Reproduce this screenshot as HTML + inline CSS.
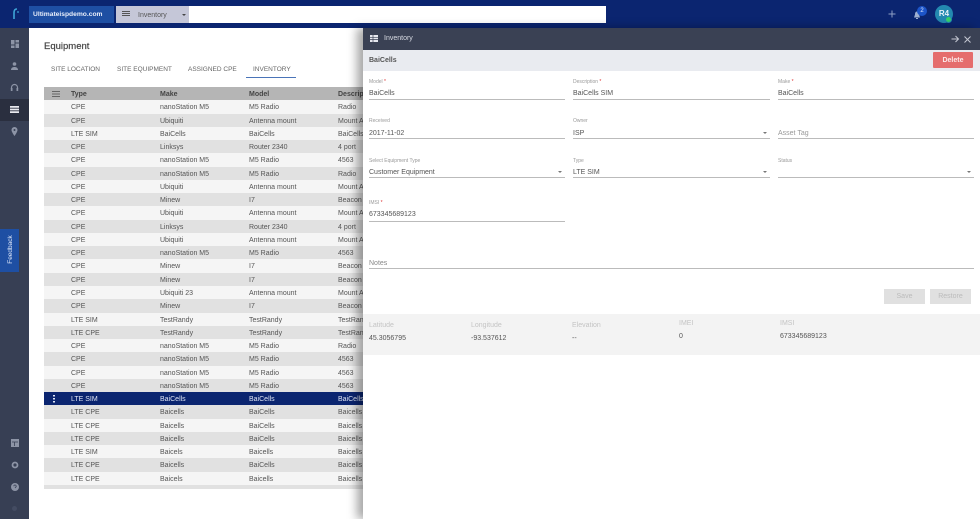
<!DOCTYPE html>
<html><head><meta charset="utf-8"><style>
html,body{margin:0;padding:0;width:980px;height:519px;overflow:hidden;background:#fff;font-family:"Liberation Sans",sans-serif;color:#444}
*{box-sizing:border-box}
.a{position:absolute;white-space:nowrap}
#top{position:absolute;left:0;top:0;width:980px;height:28px;background:#0b2570}
#side{position:absolute;left:0;top:28px;width:29px;height:491px;background:#373f54}
#grid{position:absolute;left:44px;top:87px;width:330px}
.r{position:relative;height:13.27px;font-size:7px;line-height:13.27px;color:#555}
.r span{position:absolute;white-space:nowrap;top:1px}
.r span:nth-child(1){left:27px}.r span:nth-child(2){left:116px}.r span:nth-child(3){left:205px}.r span:nth-child(4){left:294px}
.r:nth-child(even){background:#f5f5f5}.r:nth-child(odd){background:#e1e1e1}
.r.h{background:#b5b5b5;font-weight:bold;color:#444}
.r.s{background:#0b2570;color:#dfe5f5}
#panel{position:absolute;left:363px;top:28px;width:617px;height:491px;background:#fff;box-shadow:-6px 0 9px rgba(0,0,0,.35)}
.lb{position:absolute;font-size:5px;color:#999;white-space:nowrap;margin-top:1px}
.lb b{color:#d33;font-weight:normal}
.v{position:absolute;font-size:7px;color:#555;white-space:nowrap;margin-top:2px}
.u{position:absolute;height:1px;background:#bbb}
.ar{position:absolute;width:0;height:0;border-left:2px solid transparent;border-right:2px solid transparent;border-top:2px solid #777}
.t{position:absolute;top:66px;font-size:6.5px;line-height:8px;color:#666;white-space:nowrap}
</style></head><body>
<div id="top">
<svg class="a" style="left:11px;top:7px" width="9" height="13" viewBox="0 0 9 13"><path d="M3 12V6C3 3 4 2 6 2" fill="none" stroke="#3fa6d8" stroke-width="1.6"/><circle cx="7" cy="5" r=".9" fill="#3fa6d8"/></svg>
<div class="a" style="left:29px;top:6px;width:85px;height:17px;background:#1e4fa3;color:#e8eefa;font-size:6.7px;font-weight:bold;line-height:18px;padding-left:4px">Ultimateispdemo.com</div>
<div class="a" style="left:116px;top:6px;width:490px;height:17px;background:#fff"></div>
<div class="a" style="left:116px;top:6px;width:73px;height:17px;background:#c5c7d8;color:#555;font-size:7px;line-height:19px;padding-left:22px">Inventory</div>
<svg class="a" style="left:122px;top:11px" width="8" height="6"><path d="M0 .5h8M0 2.500h8M0 4.500h8" stroke="#555" stroke-width="1.100"/></svg>
<div class="ar" style="left:182px;top:14px;border-top-color:#444"></div>
<svg class="a" style="left:888px;top:10px" width="8" height="8"><path d="M4 .5v7M.5 4h7" stroke="#8fa0c4" stroke-width="1"/></svg>
<svg class="a" style="left:913px;top:11px" width="8" height="8"><path d="M4 .5C2.500.5 2 2 2 3.500L1 6.500h6L6 3.500C6 2 5.500.5 4 .5zM3 7h2v1H3z" fill="#9fb0d0"/></svg>
<div class="a" style="left:917px;top:6px;width:10px;height:10px;border-radius:50%;background:#1c54c8;color:#dfe8ff;font-size:6px;line-height:10px;text-align:center">2</div>
<div class="a" style="left:935px;top:5px;width:18px;height:18px;border-radius:50%;background:#2389b0;color:#e6f2f8;font-size:8px;font-weight:bold;line-height:17px;text-align:center">R4</div>
<div class="a" style="left:945px;top:16px;width:7px;height:7px;border-radius:50%;background:#35d06a;border:1px solid #2389b0"></div>
</div>
<div id="side">
<div class="a" style="left:0;top:71px;width:29px;height:22px;background:#2a2f3f"></div>
<svg class="a" style="left:11px;top:12px" width="8" height="8"><path d="M0 0h3.500v4.500H0zM4.500 0H8v2.500H4.500zM4.500 3.500H8V8H4.500zM0 5.500h3.500V8H0z" fill="#8d94a6"/></svg>
<svg class="a" style="left:10px;top:34px" width="9" height="8"><circle cx="4.500" cy="2" r="1.800" fill="#8d94a6"/><path d="M1 8c0-2 1.500-3 3.500-3S8 6 8 8z" fill="#8d94a6"/></svg>
<svg class="a" style="left:10px;top:55px" width="9" height="9"><path d="M1.500 6V4.500a3 3 0 0 1 6 0V6" fill="none" stroke="#8d94a6" stroke-width="1.200"/><path d="M.8 5h1.700v3H.8zM6.500 5h1.700v3H6.500z" fill="#8d94a6"/></svg>
<svg class="a" style="left:10px;top:78px" width="9" height="7"><path d="M0 0h9v1.800H0zM0 2.600h9v1.800H0zM0 5.200h9V7H0z" fill="#e8e9ee"/></svg>
<svg class="a" style="left:11px;top:99px" width="7" height="9"><path d="M3.500 0A3 3 0 0 0 .5 3c0 2 3 6 3 6s3-4 3-6a3 3 0 0 0-3-3z" fill="#8d94a6"/><circle cx="3.500" cy="3" r="1" fill="#373f54"/></svg>
<svg class="a" style="left:11px;top:411px" width="8" height="8"><path d="M0 0h8v8H0z" fill="#8d94a6"/><path d="M1 3h6M3.500 3v4" stroke="#373f54" stroke-width=".8"/></svg>
<svg class="a" style="left:11px;top:433px" width="8" height="8"><circle cx="4" cy="4" r="2.500" fill="none" stroke="#8d94a6" stroke-width="1.800"/></svg>
<svg class="a" style="left:11px;top:455px" width="8" height="8"><circle cx="4" cy="4" r="4" fill="#8d94a6"/><path d="M2.800 3.200a1.200 1.200 0 1 1 1.700 1.100L4 5" fill="none" stroke="#373f54" stroke-width=".8"/></svg>
<div class="a" style="left:12px;top:478px;width:5px;height:5px;border-radius:50%;background:#444c62"></div>
</div>
<div class="a" style="left:0;top:229px;width:19px;height:43px;background:#1e4fa3"></div>
<div class="a" style="left:-10px;top:246px;width:41px;text-align:center;font-size:6.5px;color:#dfe8fa;transform:rotate(-90deg)">Feedback</div>
<div class="a" style="left:44px;top:41px;font-size:9.500px;line-height:12px;-webkit-text-stroke:.2px #444;color:#444">Equipment</div>
<div class="t" style="left:51px">SITE LOCATION</div>
<div class="t" style="left:117px">SITE EQUIPMENT</div>
<div class="t" style="left:188px">ASSIGNED CPE</div>
<div class="t" style="left:253px">INVENTORY</div>
<div class="a" style="left:246px;top:77px;width:50px;height:1px;background:#4a74b8"></div>
<div id="grid">
<div class="r h"><span>Type</span><span>Make</span><span>Model</span><span>Description</span></div>
<div class="r"><span>CPE</span><span>nanoStation M5</span><span>M5 Radio</span><span>Radio</span></div>
<div class="r"><span>CPE</span><span>Ubiquiti</span><span>Antenna mount</span><span>Mount Adapter</span></div>
<div class="r"><span>LTE SIM</span><span>BaiCells</span><span>BaiCells</span><span>BaiCells SIM</span></div>
<div class="r"><span>CPE</span><span>Linksys</span><span>Router 2340</span><span>4 port</span></div>
<div class="r"><span>CPE</span><span>nanoStation M5</span><span>M5 Radio</span><span>4563</span></div>
<div class="r"><span>CPE</span><span>nanoStation M5</span><span>M5 Radio</span><span>Radio</span></div>
<div class="r"><span>CPE</span><span>Ubiquiti</span><span>Antenna mount</span><span>Mount Adapter</span></div>
<div class="r"><span>CPE</span><span>Minew</span><span>I7</span><span>Beacon</span></div>
<div class="r"><span>CPE</span><span>Ubiquiti</span><span>Antenna mount</span><span>Mount Adapter</span></div>
<div class="r"><span>CPE</span><span>Linksys</span><span>Router 2340</span><span>4 port</span></div>
<div class="r"><span>CPE</span><span>Ubiquiti</span><span>Antenna mount</span><span>Mount Adapter</span></div>
<div class="r"><span>CPE</span><span>nanoStation M5</span><span>M5 Radio</span><span>4563</span></div>
<div class="r"><span>CPE</span><span>Minew</span><span>I7</span><span>Beacon</span></div>
<div class="r"><span>CPE</span><span>Minew</span><span>I7</span><span>Beacon</span></div>
<div class="r"><span>CPE</span><span>Ubiquiti 23</span><span>Antenna mount</span><span>Mount Adapter</span></div>
<div class="r"><span>CPE</span><span>Minew</span><span>I7</span><span>Beacon</span></div>
<div class="r"><span>LTE SIM</span><span>TestRandy</span><span>TestRandy</span><span>TestRandy</span></div>
<div class="r"><span>LTE CPE</span><span>TestRandy</span><span>TestRandy</span><span>TestRandy</span></div>
<div class="r"><span>CPE</span><span>nanoStation M5</span><span>M5 Radio</span><span>Radio</span></div>
<div class="r"><span>CPE</span><span>nanoStation M5</span><span>M5 Radio</span><span>4563</span></div>
<div class="r"><span>CPE</span><span>nanoStation M5</span><span>M5 Radio</span><span>4563</span></div>
<div class="r"><span>CPE</span><span>nanoStation M5</span><span>M5 Radio</span><span>4563</span></div>
<div class="r s"><span>LTE SIM</span><span>BaiCells</span><span>BaiCells</span><span>BaiCells</span></div>
<div class="r"><span>LTE CPE</span><span>Baicells</span><span>BaiCells</span><span>Baicells</span></div>
<div class="r"><span>LTE CPE</span><span>Baicells</span><span>BaiCells</span><span>Baicells</span></div>
<div class="r"><span>LTE CPE</span><span>Baicells</span><span>BaiCells</span><span>Baicells</span></div>
<div class="r"><span>LTE SIM</span><span>Baicels</span><span>Baicells</span><span>Baicells</span></div>
<div class="r"><span>LTE CPE</span><span>Baicells</span><span>BaiCells</span><span>Baicells</span></div>
<div class="r"><span>LTE CPE</span><span>Baicels</span><span>Baicells</span><span>Baicells</span></div>
<div style="height:4px;background:#e1e1e1"></div>
</div>
<svg class="a" style="left:52px;top:91px" width="8" height="6"><path d="M0 .5h8M0 3h8M0 5.500h8" stroke="#666" stroke-width=".9"/></svg>
<svg class="a" style="left:53px;top:395px" width="3" height="8"><path d="M0 0h2v1.500H0zM0 3h2v1.500H0zM0 6h2v1.500H0z" fill="#dfe5f5"/></svg>
<div id="panel">
<div class="a" style="left:0;top:0;width:617px;height:22px;background:#3a4154"></div>
<svg class="a" style="left:7px;top:7px" width="8" height="7"><path d="M0 0h8v7H0z" fill="#e6e8ee"/><path d="M0 2.300h8M0 4.600h8M3 0v7" stroke="#3a4154" stroke-width=".7"/></svg>
<div class="a" style="left:21px;top:6px;font-size:7px;line-height:10px;color:#d8dbe3">Inventory</div>
<svg class="a" style="left:588px;top:7px" width="9" height="8"><path d="M.5 4h7M4.500 1l3 3-3 3" fill="none" stroke="#c5c8d2" stroke-width="1"/></svg>
<svg class="a" style="left:601px;top:8px" width="7" height="7"><path d="M.5.500l6 6M6.500.500l-6 6" stroke="#c5c8d2" stroke-width="1"/></svg>
<div class="a" style="left:0;top:22px;width:617px;height:21px;background:#e9ebf0"></div>
<div class="a" style="left:6px;top:28px;font-size:7px;line-height:10px;font-weight:bold;color:#555">BaiCells</div>
<div class="a" style="left:570px;top:24px;width:40px;height:16px;background:#e56d6d;border-radius:1px;color:#fbe9e9;font-size:7px;font-weight:bold;line-height:17px;text-align:center">Delete</div>

<div class="lb" style="left:6px;top:50px">Model <b>*</b></div><div class="v" style="left:6px;top:60px">BaiCells</div><div class="u" style="left:6px;top:71px;width:196px"></div>
<div class="lb" style="left:210px;top:50px">Description <b>*</b></div><div class="v" style="left:210px;top:60px">BaiCells SIM</div><div class="u" style="left:210px;top:71px;width:197px"></div>
<div class="lb" style="left:415px;top:50px">Make <b>*</b></div><div class="v" style="left:415px;top:60px">BaiCells</div><div class="u" style="left:415px;top:71px;width:196px"></div>

<div class="lb" style="left:6px;top:89px">Received</div><div class="v" style="left:6px;top:100px">2017-11-02</div><div class="u" style="left:6px;top:110px;width:196px"></div>
<div class="lb" style="left:210px;top:89px">Owner</div><div class="v" style="left:210px;top:100px">ISP</div><div class="ar" style="left:400px;top:104px"></div><div class="u" style="left:210px;top:110px;width:197px"></div>
<div class="v" style="left:415px;top:100px;color:#999">Asset Tag</div><div class="u" style="left:415px;top:110px;width:196px"></div>

<div class="lb" style="left:6px;top:129px">Select Equipment Type</div><div class="v" style="left:6px;top:139px">Customer Equipment</div><div class="ar" style="left:195px;top:143px"></div><div class="u" style="left:6px;top:149px;width:196px"></div>
<div class="lb" style="left:210px;top:129px">Type</div><div class="v" style="left:210px;top:139px">LTE SIM</div><div class="ar" style="left:400px;top:143px"></div><div class="u" style="left:210px;top:149px;width:197px"></div>
<div class="lb" style="left:415px;top:129px">Status</div><div class="ar" style="left:604px;top:143px"></div><div class="u" style="left:415px;top:149px;width:196px"></div>

<div class="lb" style="left:6px;top:171px">IMSI <b>*</b></div><div class="v" style="left:6px;top:181px">673345689123</div><div class="u" style="left:6px;top:193px;width:196px"></div>
<div class="v" style="left:6px;top:230px;color:#888">Notes</div><div class="u" style="left:6px;top:240px;width:605px"></div>

<div class="a" style="left:521px;top:261px;width:41px;height:15px;background:#e0e0e0;color:#bbb;font-size:7px;line-height:15px;text-align:center">Save</div>
<div class="a" style="left:567px;top:261px;width:41px;height:15px;background:#e0e0e0;color:#bbb;font-size:7px;line-height:15px;text-align:center">Restore</div>

<div class="a" style="left:0;top:286px;width:617px;height:41px;background:#f3f3f3"></div>
<div class="v" style="left:6px;top:292px;color:#c4c4c4">Latitude</div><div class="v" style="left:6px;top:305px">45.3056795</div>
<div class="v" style="left:108px;top:292px;color:#c4c4c4">Longitude</div><div class="v" style="left:108px;top:305px">-93.537612</div>
<div class="v" style="left:209px;top:292px;color:#c4c4c4">Elevation</div><div class="v" style="left:209px;top:305px">--</div>
<div class="v" style="left:316px;top:290px;color:#c4c4c4">IMEI</div><div class="v" style="left:316px;top:303px">0</div>
<div class="v" style="left:417px;top:290px;color:#c4c4c4">IMSI</div><div class="v" style="left:417px;top:303px">673345689123</div>
</div>
</body></html>
